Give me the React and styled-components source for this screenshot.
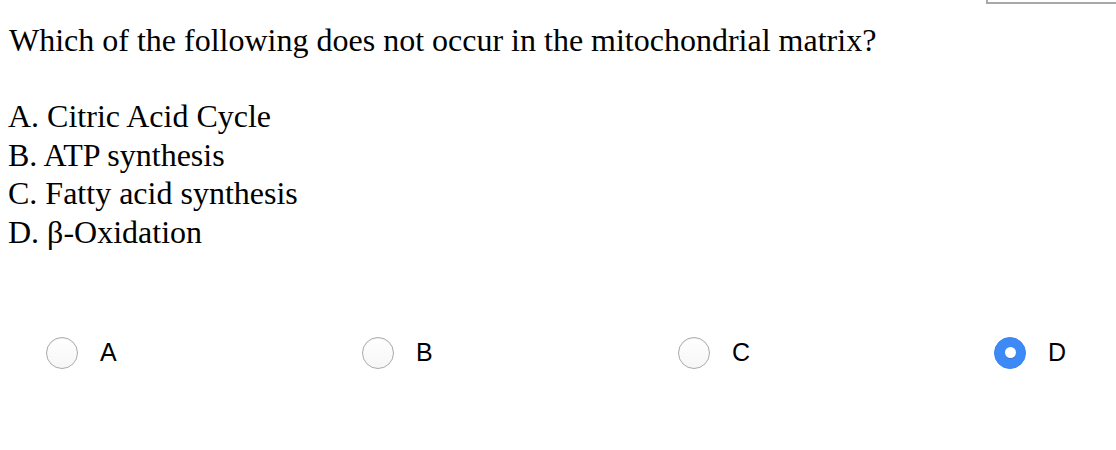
import React from "react";
import styled, { createGlobalStyle } from "styled-components";

const Global = createGlobalStyle`
  html, body { margin: 0; padding: 0; background: #fff; }
  body { font-family: "Liberation Serif", "Times New Roman", serif; color: #000; }
`;

const Page = styled.div`
  width: 1116px;
  height: 450px;
  display: flex;
  flex-direction: column;
  overflow: hidden;
`;

const TopStrip = styled.div`
  display: flex;
  justify-content: flex-end;
  height: 4px;
  flex: none;
`;

const CornerBox = styled.div`
  width: 128px;
  height: 2px;
  border-left: 2px solid #a8a8a8;
  border-bottom: 2px solid #a8a8a8;
`;

const Question = styled.p`
  margin: 18px 0 0 0;
  padding-left: 9px;
  font-size: 32px;
  line-height: 37px;
`;

const Options = styled.ol`
  list-style: none;
  margin: 38px 0 0 0;
  padding-left: 8px;
  font-size: 32px;
  line-height: 38.7px;
`;

const Option = styled.li``;

const Choices = styled.div`
  display: grid;
  grid-template-columns: repeat(4, 316px);
  margin-top: 85px;
  padding-left: 46px;
`;

const Choice = styled.label`
  display: flex;
  align-items: center;
  gap: 22px;
  font-family: "Liberation Sans", Arial, sans-serif;
  font-size: 25px;
  height: 32px;
`;

const Radio = styled.span`
  box-sizing: border-box;
  width: 32px;
  height: 32px;
  border-radius: 50%;
  flex: none;
  display: flex;
  align-items: center;
  justify-content: center;
  ${(p) =>
    p.$checked
      ? `
    background: #3d8af7;
    border: 1px solid #3a84ee;
  `
      : `
    background: linear-gradient(#ffffff, #f6f6f6);
    border: 1px solid #ababab;
    box-shadow: inset 0 1px 1px rgba(0,0,0,0.05);
  `}
`;

const Dot = styled.span`
  width: 11px;
  height: 11px;
  border-radius: 50%;
  background: #fff;
  box-shadow: 0 1px 1px rgba(0,0,0,0.15);
`;

const options = [
  "A. Citric Acid Cycle",
  "B. ATP synthesis",
  "C. Fatty acid synthesis",
  "D. \u03B2-Oxidation",
];

const choices = ["A", "B", "C", "D"];

export default function App() {
  return (
    <Page>
      <Global />
      <TopStrip>
        <CornerBox />
      </TopStrip>
      <Question>Which of the following does not occur in the mitochondrial matrix?</Question>
      <Options>
        {options.map((o) => (
          <Option key={o}>{o}</Option>
        ))}
      </Options>
      <Choices>
        {choices.map((c) => (
          <Choice key={c}>
            <Radio $checked={c === "D"}>{c === "D" && <Dot />}</Radio>
            {c}
          </Choice>
        ))}
      </Choices>
    </Page>
  );
}
